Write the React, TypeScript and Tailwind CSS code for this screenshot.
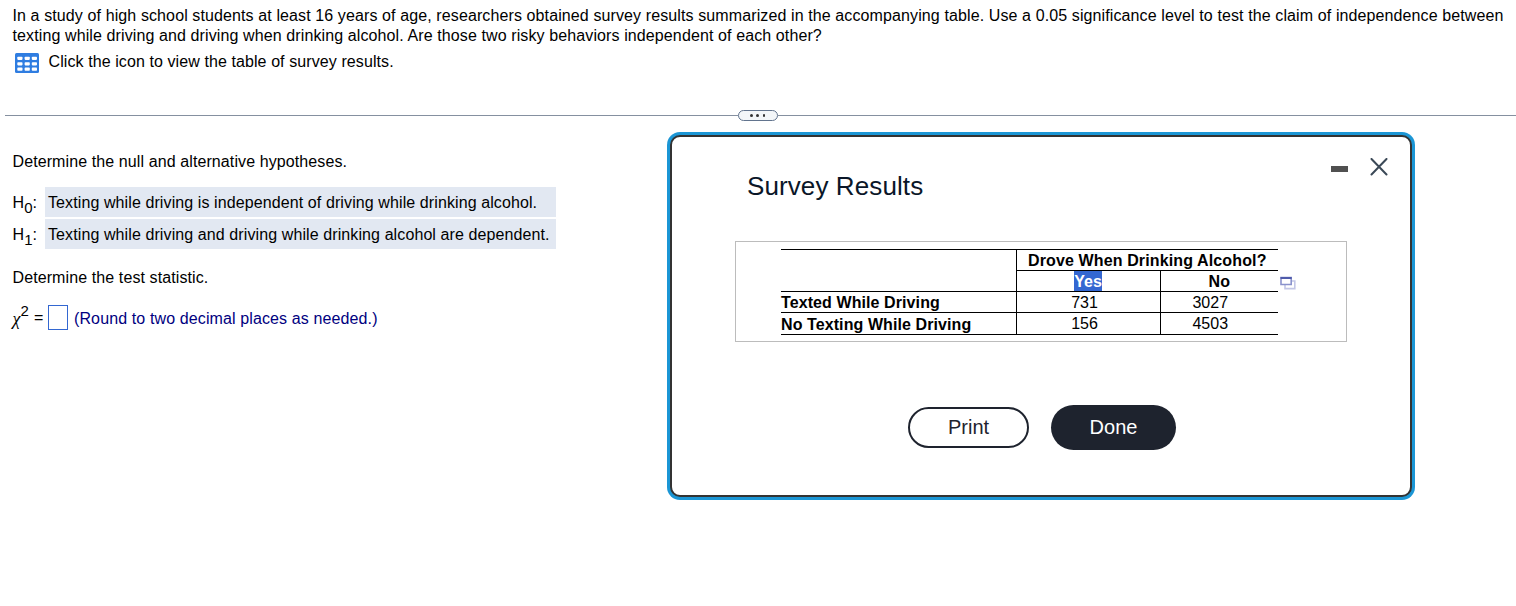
import { clsx } from "clsx";

const hypotheses = [
  {
    index: "0",
    text: "Texting while driving is independent of driving while drinking alcohol.",
  },
  {
    index: "1",
    text: "Texting while driving and driving while drinking alcohol are dependent.",
  },
];

const surveyRows = [
  { label: "Texted While Driving", yes: "731", no: "3027" },
  { label: "No Texting While Driving", yes: "156", no: "4503" },
];

function TableIcon() {
  return (
    <svg width="24" height="20" viewBox="0 0 24 20" className="block">
      <rect width="24" height="20" rx="1.5" fill="#2f7de1" />
      {[3.7, 9.2, 14.6].map((y) =>
        [2.3, 9.6, 16.8].map((x) => (
          <rect
            key={`${x}-${y}`}
            x={x}
            y={y}
            width="5.2"
            height="3.2"
            rx="0.8"
            fill="#fff"
          />
        )),
      )}
    </svg>
  );
}

function PopOutIcon() {
  return (
    <svg width="16" height="14" viewBox="0 0 16 14" className="block">
      <path d="M5 5h9.8v7.6H5z" fill="#fff" stroke="#c3c7e6" strokeWidth="1.6" />
      <path d="M1 1.5h10.2v7H1z" fill="#fff" stroke="#8a92cc" strokeWidth="1.6" />
      <path d="M0.5 2h11.2" stroke="#4f5bab" strokeWidth="2" />
    </svg>
  );
}

function Divider() {
  return (
    <div className="ml-[5px] flex h-3 items-center">
      <div className="h-px w-[733px] bg-[#8590a0]" />
      <div className="flex h-[11px] w-10 items-center justify-center gap-[3px] rounded-full border border-[#62748e] bg-[#f3f6f9] pr-0.5">
        <span className="size-[3px] rounded-full bg-[#333]" />
        <span className="size-[3px] rounded-full bg-[#333]" />
        <span className="ml-px h-[3px] w-[2px] rounded-full bg-[#333]" />
      </div>
      <div className="h-px flex-1 bg-[#8590a0]" />
    </div>
  );
}

function SurveyTable() {
  return (
    <div className="ml-[63px] mt-10 flex h-[101px] w-[612px] border border-[#bcbcbc] pl-[45px] pt-[7px]">
      <table className="h-[86px] w-[497px] table-fixed border-collapse border-y border-black leading-[18px]">
        <colgroup>
          <col className="w-[235px]" />
          <col className="w-[144px]" />
          <col className="w-[118px]" />
        </colgroup>
        <tbody>
          <tr className="h-[21px]">
            <td rowSpan={2} className="p-0" />
            <th
              colSpan={2}
              className="border-b border-l border-black p-0 pt-0.5 tracking-[0.13px]"
            >
              Drove When Drinking Alcohol?
            </th>
          </tr>
          <tr className="h-[21px]">
            <th className="border-l border-black p-0">
              <span className="mx-auto block h-5 w-7 bg-[#3367d1] pt-0.5 text-white">
                Yes
              </span>
            </th>
            <th className="border-l border-black p-0 pt-0.5">No</th>
          </tr>
          {surveyRows.map((row, i) => (
            <tr
              key={row.label}
              className={clsx(
                "border-t border-black",
                i === 0 ? "h-[21px]" : "h-[22px]",
              )}
            >
              <th className="p-0 pt-0.5 text-left tracking-[0.09px]">
                {row.label}
              </th>
              <td
                className={clsx(
                  "border-l border-black p-0 pr-[7px] text-center",
                  i === 0 && "pt-0.5",
                )}
              >
                {row.yes}
              </td>
              <td
                className={clsx(
                  "border-l border-black p-0 pr-[18px] text-center",
                  i === 0 && "pt-0.5",
                )}
              >
                {row.no}
              </td>
            </tr>
          ))}
        </tbody>
      </table>
      <div className="ml-0.5 mt-[27px]">
        <PopOutIcon />
      </div>
    </div>
  );
}

function SurveyDialog() {
  return (
    <div className="absolute left-[667px] top-[132px] h-[368px] w-[748px] rounded-[13px] bg-[#1b96d5] p-[3px]">
      <div className="h-full rounded-[10px] border-2 border-[#333] bg-white">
        <div className="flex justify-between">
          <h2 className="ml-[75px] mt-[34px] text-[26px] leading-[30px] tracking-[0.1px] text-[#0a1628]">
            Survey Results
          </h2>
          <div className="mr-[22px] mt-[21px] flex gap-[22px]">
            <span className="mt-2 h-[6px] w-[17px] bg-[#505050]" />
            <svg
              width="18"
              height="18"
              viewBox="0 0 18 18"
              fill="none"
              stroke="#3b4957"
              strokeWidth="2"
              strokeLinecap="round"
            >
              <path d="M1.5 1l15 15.5M16.5 1l-15 15.5" />
            </svg>
          </div>
        </div>
        <SurveyTable />
        <div className="ml-[236px] mt-[63px] flex items-center gap-[22px] text-xl">
          <button className="h-[41px] w-[121px] rounded-full border-2 border-[#1e232e] pb-0.5 text-[#1e232e]">
            Print
          </button>
          <button className="h-[45px] w-[125px] rounded-full bg-[#1e232e] pb-0.5 text-white">
            Done
          </button>
        </div>
      </div>
    </div>
  );
}

export default function App() {
  return (
    <main className="relative h-[606px] w-[1516px] overflow-hidden bg-white pt-1.5 font-['Liberation_Sans',Arial,sans-serif] text-base leading-5 text-black">
      <p className="ml-[12.5px] whitespace-nowrap tracking-[0.11px]">
        In a study of high school students at least 16 years of age, researchers
        obtained survey results summarized in the accompanying table. Use a 0.05
        significance level to test the claim of independence between
        <br />
        texting while driving and driving when drinking alcohol. Are those two
        risky behaviors independent of each other?
      </p>
      <div className="ml-[15px] mt-1.5 flex h-[22px] gap-[9.5px] tracking-[0.09px]">
        <div className="mt-px">
          <TableIcon />
        </div>
        <span>Click the icon to view the table of survey results.</span>
      </div>
      <div className="mt-[35px]">
        <Divider />
      </div>
      <section className="ml-[12.5px] mt-[31px] tracking-[0.1px]">
        <p>Determine the null and alternative hypotheses.</p>
        <div className="mt-[15px] flex flex-col gap-0.5">
          {hypotheses.map((item) => (
            <div key={item.index} className="flex h-[30px] items-center">
              <span className="flex w-[32.5px] pt-px">
                H
                <span className="relative top-[5px] text-[15px]">
                  {item.index}
                </span>
                <span>:</span>
              </span>
              <span className="flex h-[30px] w-[511px] items-center bg-[#e2e8f2] pl-[3px] pt-px">
                {item.text}
              </span>
            </div>
          ))}
        </div>
        <p className="mt-[19px]">Determine the test statistic.</p>
        <div className="mt-[17px] flex h-[25px] items-center">
          <span className="flex w-[35.5px] pt-0.5">
            <span className="w-2 pt-px font-['Liberation_Serif',serif] text-[18px] italic">
              χ
            </span>
            <span className="relative -top-[7px] text-[15px]">2</span>
            <span className="ml-[5px]">=</span>
          </span>
          <span className="h-[25px] w-5 border border-[#3367d1]" />
          <span className="ml-1.5 pt-0.5 tracking-[0.12px] text-[#000080]">
            (Round to two decimal places as needed.)
          </span>
        </div>
      </section>
      <SurveyDialog />
    </main>
  );
}
